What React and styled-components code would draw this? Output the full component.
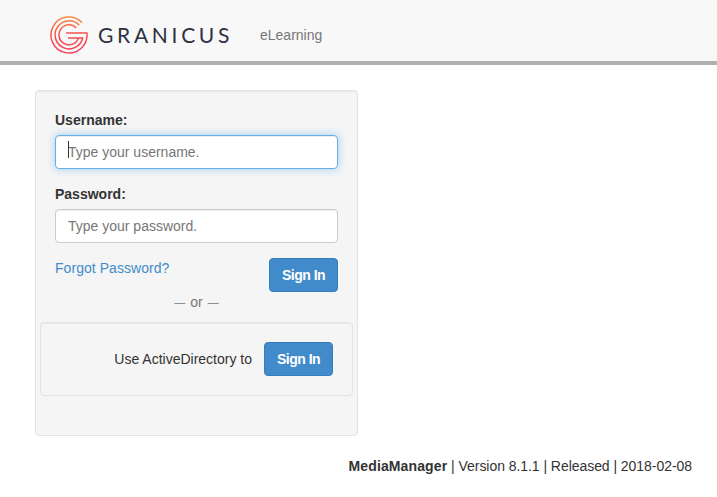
import * as React from 'react'
import styled, { createGlobalStyle } from 'styled-components'

const GlobalStyle = createGlobalStyle`
  * {
    box-sizing: border-box;
  }

  body {
    margin: 0;
    background: #fff;
    color: #333;
    font-family: 'Liberation Sans', Arial, sans-serif;
    font-size: 14px;
    line-height: 20px;
  }
`

const Header = styled.header`
  display: flex;
  align-items: center;
  height: 65px;
  padding: 8px 0 0 50px;
  background: #f8f8f8;
  border-bottom: 4px solid #b1b1b1;
`

const Brand = styled.div`
  display: flex;
  align-items: center;
  gap: 10px;
  width: 210px;
`

const BrandName = styled.span`
  color: #2f3140;
  font-family: Lato, sans-serif;
  font-size: 21px;
  font-weight: 400;
  letter-spacing: 3.7px;
  line-height: 24px;
`

const AppName = styled.span`
  color: #777;
  font-size: 14px;
`

const Main = styled.main`
  padding: 25px 25px 0 35px;
`

const Well = styled.div`
  padding: 19px;
  margin-bottom: 20px;
  background: #f5f5f5;
  border: 1px solid #e3e3e3;
  border-radius: 4px;
  box-shadow: inset 0 1px 1px rgba(0, 0, 0, 0.05);
`

const LoginWell = styled(Well)`
  width: 323px;
`

const InnerWell = styled(Well)`
  display: flex;
  justify-content: flex-end;
  align-items: center;
  gap: 12px;
  margin: 10px -15px 20px;
`

const FormGroup = styled.div`
  position: relative;
  margin-bottom: 15px;
`

const Label = styled.label`
  display: block;
  margin-bottom: 5px;
  font-weight: bold;
`

const Input = styled.input`
  display: block;
  width: 100%;
  height: 34px;
  padding: 6px 12px;
  background: #fff;
  border: 1px solid ${(props) => (props.$focused ? '#66afe9' : '#ccc')};
  border-radius: 4px;
  box-shadow: ${(props) =>
    props.$focused
      ? 'inset 0 1px 1px rgba(0, 0, 0, 0.075), 0 0 8px rgba(102, 175, 233, 0.6)'
      : 'inset 0 1px 1px rgba(0, 0, 0, 0.075)'};
  color: #555;
  font-family: inherit;
  font-size: 14px;
  outline: 0;

  &::placeholder {
    color: #777;
    opacity: 1;
  }
`

const Caret = styled.span`
  position: absolute;
  left: 13px;
  top: 31px;
  width: 1px;
  height: 17px;
  background: #333;
`

const Actions = styled.div`
  display: flex;
  justify-content: space-between;
  align-items: flex-start;
`

const ForgotLink = styled.a`
  color: #428bca;
  letter-spacing: 0.05px;
  text-decoration: none;
`

const Button = styled.button`
  width: 69px;
  height: 34px;
  padding: 0;
  background: #428bca;
  border: 1px solid #357ebd;
  border-radius: 4px;
  color: #fff;
  font-family: inherit;
  font-size: 14px;
  font-weight: bold;
  letter-spacing: -0.5px;
  cursor: pointer;
`

const Or = styled.div`
  display: flex;
  justify-content: center;
  align-items: center;
  gap: 5px;
  height: 20px;
  color: #777;
`

const Dash = styled.span`
  font-size: 11px;
  line-height: 20px;
`

const Footer = styled.footer`
  letter-spacing: -0.05px;
  text-align: right;

  strong {
    letter-spacing: 0.12px;
  }
`

const Logo = () => (
  <svg width='38' height='38' viewBox='0 0 38 38' fill='none' aria-hidden='true'>
    <defs>
      <linearGradient id='logoGrad' gradientUnits='userSpaceOnUse' x1='19' y1='0' x2='19' y2='38'>
        <stop offset='0' stopColor='#fb8f45' />
        <stop offset='0.45' stopColor='#f9544d' />
        <stop offset='1' stopColor='#f93a57' />
      </linearGradient>
    </defs>
    <g stroke='url(#logoGrad)' strokeWidth='1.5'>
      <path d='M32 6.5 A18 18 0 1 0 36.9 17 H16' />
      <path d='M29.2 9.2 A14 14 0 1 0 32.7 22 H18' />
      <path d='M26.3 12 A10 10 0 1 0 28.5 22' />
    </g>
  </svg>
)

const App = () => {
  return (
    <>
      <GlobalStyle />
      <Header>
        <Brand>
          <Logo />
          <BrandName>GRANICUS</BrandName>
        </Brand>
        <AppName>eLearning</AppName>
      </Header>
      <Main>
        <LoginWell>
          <FormGroup>
            <Label htmlFor='username'>Username:</Label>
            <Input id='username' type='text' placeholder='Type your username.' $focused />
            <Caret />
          </FormGroup>
          <FormGroup>
            <Label htmlFor='password'>Password:</Label>
            <Input id='password' type='password' placeholder='Type your password.' />
          </FormGroup>
          <Actions>
            <ForgotLink href='#'>Forgot Password?</ForgotLink>
            <Button type='button'>Sign In</Button>
          </Actions>
          <Or>
            <Dash>—</Dash>
            <span>or</span>
            <Dash>—</Dash>
          </Or>
          <InnerWell>
            <span>Use ActiveDirectory to</span>
            <Button type='button'>Sign In</Button>
          </InnerWell>
        </LoginWell>
        <Footer>
          <strong>MediaManager</strong> | Version 8.1.1 | Released | 2018-02-08
        </Footer>
      </Main>
    </>
  )
}

export default App
